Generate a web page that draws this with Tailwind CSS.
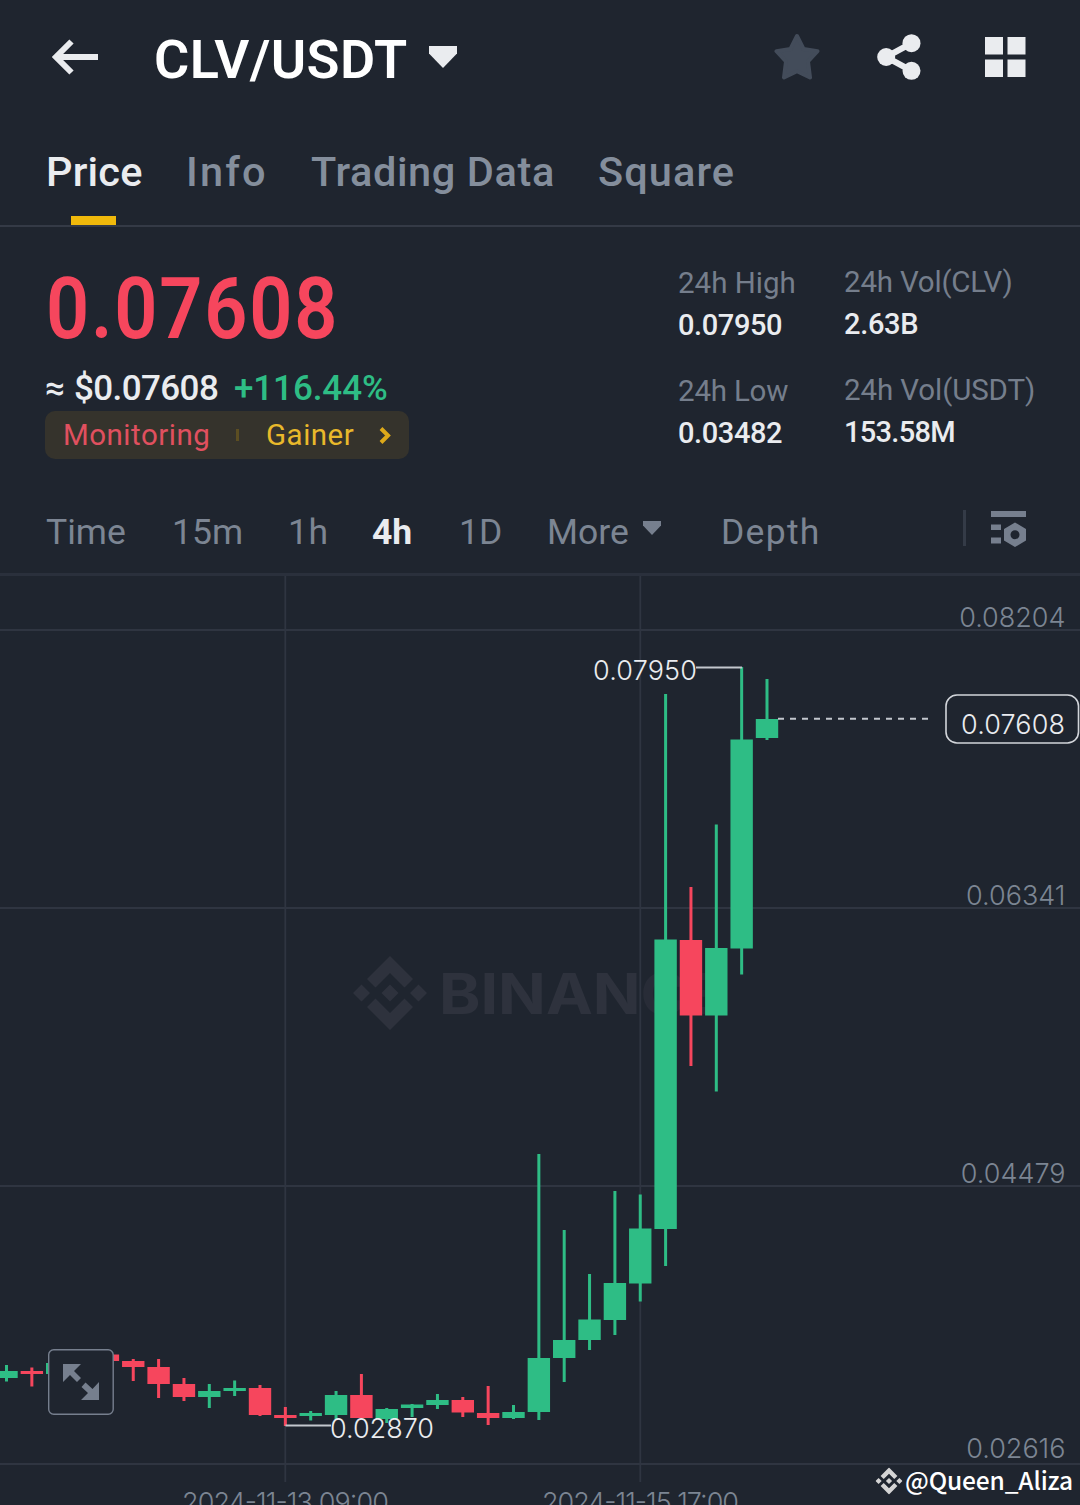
<!DOCTYPE html>
<html lang="en">
<head>
    <meta charset="UTF-8">
    <meta name="viewport" content="width=device-width, initial-scale=1.0">
    <title>CLV/USDT</title>
    <script src="https://cdn.jsdelivr.net/npm/@tailwindcss/browser@4"></script>
</head>
<body class="w-[1080px] h-[1505px] overflow-hidden bg-[#1f252f] font-[Roboto,sans-serif] text-[#eaecef] whitespace-nowrap">
    <!-- Top bar -->
    <header class="flex items-center h-[115px] pb-[2px] pl-[52px] pr-[54px]">
        <svg class="w-[47px] h-[38px]" viewBox="0 0 47 38" fill="none" stroke="#eaecef" stroke-width="6">
            <path d="M3 19H46M19.500 3.500L4 19L19.500 34.500" />
        </svg>
        <h1 class="ml-[55px] mt-[7px] text-[54px] leading-[60px] font-semibold tracking-[0.4px] text-white">CLV/USDT</h1>
        <svg class="ml-[21px] w-[28px] h-[22px]" viewBox="0 0 28 22" fill="#eaecef">
            <path d="M0 0H28V7.500L14 22L0 7.500Z" />
        </svg>
        <div class="flex items-center ml-auto">
            <svg class="w-[46px] h-[48px]" viewBox="0 0 46 48" fill="#434c5a" stroke="#434c5a" stroke-width="4" stroke-linejoin="round">
                <path d="M23 3L29.500 16L43.500 18.200L34 28.500L36 44.500L23 38.300L10 44.500L12 28.500L2.500 18.200L16.500 16Z" />
            </svg>
            <svg class="ml-[57px] w-[44px] h-[46px]" viewBox="0 0 44 46" fill="#eaecef">
                <path d="M34 9.500L9 23L34 36.500" fill="none" stroke="#eaecef" stroke-width="6" />
                <circle cx="34.500" cy="9.200" r="9" />
                <circle cx="9.200" cy="23" r="9" />
                <circle cx="34.500" cy="36.800" r="9" />
            </svg>
            <svg class="ml-[64px] w-[41px] h-[40px]" viewBox="0 0 41 40" fill="#eaecef">
                <path d="M0 0H18V17.500H0ZM22.500 0H40.500V17.500H22.500ZM0 22.500H18V40H0ZM22.500 22.500H40.500V40H22.500Z" />
            </svg>
        </div>
    </header>

    <!-- Tabs -->
    <nav class="flex h-[112px] pt-[34px] pl-[45px] border-b-2 border-[#343a46] text-[41.5px] leading-[46px] font-medium text-[#848e9c]">
        <div class="w-[141px] flex flex-col">
            <span class="ml-px tracking-[0.2px] text-[#eaecef]">Price</span>
            <span class="ml-[26px] mt-auto w-[45px] h-[9px] bg-[#f0b90b]"></span>
        </div>
        <span class="w-[125px] tracking-[2.2px]">Info</span>
        <span class="w-[287px] tracking-[0.6px]">Trading Data</span>
        <span class="tracking-[1.1px]">Square</span>
    </nav>

    <!-- Price summary -->
    <section class="flex h-[256px] pl-[45px]">
        <div class="w-[633px] pt-[32px]">
            <div class="ml-px text-[85px] leading-[100px] font-semibold tracking-[2px] text-[#f6465d] scale-x-[0.89] origin-left">0.07608</div>
            <div class="flex mt-[7px] text-[35px] leading-[46px] font-medium">
                <span class="w-[29px]">≈</span>
                <span class="w-[160px] tracking-[-0.6px]">$0.07608</span>
                <span class="tracking-[-0.1px] text-[#2ebd85]">+116.44%</span>
            </div>
            <div class="-mt-px flex items-center w-[364px] h-[48px] pl-[18px] rounded-[10px] bg-[#35332c] text-[29.5px]">
                <span class="w-[173px] pt-px tracking-[0.5px] text-[#e0505f]">Monitoring</span>
                <span class="w-[3px] h-[12px] bg-[#5c4e22]"></span>
                <span class="w-[96px] ml-[27px] pt-px tracking-[0.5px] text-[#e9b92b]">Gainer</span>
                <svg class="ml-[17px] w-[12px] h-[17px]" viewBox="0 0 12 17" fill="none" stroke="#dda91a" stroke-width="4">
                    <path d="M2 1.500L9 8.500L2 15.500" />
                </svg>
            </div>
        </div>
        <div class="grid grid-cols-[166px_auto] grid-rows-[108px_108px] content-start pt-[35px] text-[29px] leading-[42px] font-medium">
            <div>
                <div class="text-[29.5px] font-normal text-[#757e8c]">24h High</div>
                <div class="tracking-[-0.4px]">0.07950</div>
            </div>
            <div class="-mt-px">
                <div class="text-[29.5px] font-normal tracking-[-0.2px] text-[#757e8c]">24h Vol(CLV)</div>
                <div class="tracking-[-0.3px]">2.63B</div>
            </div>
            <div>
                <div class="text-[29.5px] font-normal tracking-[-0.2px] text-[#757e8c]">24h Low</div>
                <div class="tracking-[-0.4px]">0.03482</div>
            </div>
            <div class="-mt-px">
                <div class="text-[29.5px] font-normal tracking-[-0.1px] text-[#757e8c]">24h Vol(USDT)</div>
                <div class="tracking-[-0.7px]">153.58M</div>
            </div>
        </div>
    </section>

    <!-- Intervals -->
    <div class="flex items-center h-[93px] pl-[46px] pr-[54px] border-b-3 border-[#2a303c] text-[35.5px] leading-[46px] text-[#7c8593]">
        <span class="w-[126px] mt-[8px]">Time</span>
        <span class="w-[116px] mt-[8px]">15m</span>
        <span class="w-[84px] mt-[8px] tracking-[0.6px]">1h</span>
        <span class="w-[87px] mt-[7px] font-bold text-[#eaecef]">4h</span>
        <span class="w-[88px] mt-[8px]">1D</span>
        <span class="w-[96px] mt-[8px]">More</span>
        <svg class="w-[18px] h-[14px]" viewBox="0 0 18 14" fill="#767f8e">
            <path d="M0 0H18V4.500L9 14L0 4.500Z" />
        </svg>
        <span class="ml-[60px] mt-[8px] tracking-[1.3px]">Depth</span>
        <span class="ml-auto w-[3px] h-[36px] bg-[#343b47]"></span>
        <svg class="ml-[25px] mt-px w-[35px] h-[36px]" viewBox="0 0 35 36" fill="#767f8e">
            <path d="M0 0H35V6H0ZM0 13.500H10V19H0ZM0 26.500H10V32.500H0Z" />
            <path fill-rule="evenodd" d="M24 11.500L35 18V29.500L24 36L13 29.500V18ZM24 19.200A4.500 4.500 0 1 0 24 28.200A4.500 4.500 0 1 0 24 19.200Z" />
        </svg>
    </div>

    <!-- Chart -->
    <svg class="block w-[1080px] h-[929px] font-[Inter,sans-serif] font-light text-[27px]" viewBox="0 576 1080 929">
        <defs>
            <linearGradient id="fade" gradientUnits="userSpaceOnUse" x1="0" y1="0" x2="1080" y2="0">
                <stop offset="0.593" stop-color="#2e323d" />
                <stop offset="0.593" stop-color="#282c37" />
            </linearGradient>
            <symbol id="logo" viewBox="0 0 74 74">
                <path d="M37 0L60 23L51.500 31.500L37 17L22.500 31.500L14 23ZM37 74L60 51L51.500 42.500L37 57L22.500 42.500L14 51ZM0 37L8.500 28.500L17 37L8.500 45.500ZM57 37L65.500 28.500L74 37L65.500 45.500ZM28.500 37L37 28.500L45.500 37L37 45.500Z" />
            </symbol>
        </defs>

        <use href="#logo" x="353" y="956" width="74" height="74" fill="#2e323d" />
        <text x="439" y="1013.500" textLength="286" lengthAdjust="spacingAndGlyphs" class="text-[56px] font-bold" fill="url(#fade)">BINANCE</text>

        <path d="M0 630H1080M0 908H1080M0 1186H1080M0 1464H1080M285.300 576V1482M640.300 576V1482" fill="none" stroke="#2f3541" stroke-width="1.800" />

        <g fill="#7c8593" text-anchor="end">
            <text x="1065.500" y="627">0.08204</text>
            <text x="1065.500" y="905">0.06341</text>
            <text x="1065.500" y="1183">0.04479</text>
            <text x="1065.500" y="1458">0.02616</text>
        </g>
        <g fill="#7c8593">
            <text x="182" y="1512" textLength="207">2024-11-13 09:00</text>
            <text x="542" y="1512" textLength="197">2024-11-15 17:00</text>
        </g>

        <g id="candles"></g>

        <!-- High / low markers -->
        <path d="M696 667.500H742M285.500 1425.500H331" stroke="#c3c7ce" stroke-width="1.800" />
        <text x="593" y="680" fill="#eaecef" textLength="104">0.07950</text>
        <text x="330" y="1438" fill="#eaecef" textLength="104">0.02870</text>

        <!-- Last price -->
        <path d="M778 718.800H929" stroke="#c3c7ce" stroke-width="2" stroke-dasharray="6 6" />
        <rect x="946" y="695" width="132.500" height="48" rx="11" fill="#1f252f" stroke="#d2d5da" stroke-width="1.600" />
        <text x="961" y="734" fill="#eaecef" textLength="104">0.07608</text>

        <!-- Fullscreen button -->
        <rect x="48.700" y="1349.700" width="64.500" height="64.500" rx="5" fill="#1f252f" stroke="#767f8e" stroke-width="1.400" />
        <path d="M63 1364H81L74 1371L81 1378L77 1382L70 1375L63 1382ZM99 1400H81L88 1393L81.500 1387L85.500 1382.500L92.500 1389L99 1382Z" fill="#767f8e" />

        <!-- Author -->
        <use href="#logo" x="875.500" y="1467.500" width="27" height="27" fill="#d4d4d4" />
        <text x="905" y="1490" textLength="168" class="font-['Noto_Sans_CJK_SC',sans-serif] font-medium text-[24.5px]" fill="#ffffff">@Queen_Aliza</text>
    </svg>

    <script>
        const UP = "#2ebd85";
        const DOWN = "#f6465d";

        // [slot, high, body top, body bottom, low, color]
        const candles = [
            [0, 1365, 1371, 1378, 1381.5, UP],
            [1, 1367.5, 1371, 1374, 1386.5, DOWN],
            [2, 1363, 1363, 1374, 1374, UP],
            [4, 1354, 1354.5, 1361, 1361, DOWN],
            [5, 1359, 1361, 1367, 1381, DOWN],
            [6, 1359, 1367, 1384, 1398, DOWN],
            [7, 1378, 1384, 1397, 1401, DOWN],
            [8, 1384, 1391, 1397, 1408, UP],
            [9, 1380.5, 1388, 1391, 1396, UP],
            [10, 1385, 1388, 1415, 1416, DOWN],
            [11, 1407, 1415, 1418, 1426, DOWN],
            [12, 1411, 1413, 1416, 1420.5, UP],
            [13, 1391, 1395, 1415, 1419, UP],
            [14, 1374, 1395, 1418, 1418, DOWN],
            [15, 1408, 1409, 1419, 1423, UP],
            [16, 1404, 1404.5, 1408, 1417, UP],
            [17, 1394, 1400, 1405, 1409, UP],
            [18, 1397, 1400, 1412.5, 1417, DOWN],
            [19, 1386, 1413, 1418, 1425, DOWN],
            [20, 1405, 1412, 1418, 1419, UP],
            [21, 1154, 1358, 1412, 1420, UP],
            [22, 1230, 1340, 1358, 1382, UP],
            [23, 1274, 1319.5, 1340, 1350, UP],
            [24, 1191, 1283, 1320, 1335, UP],
            [25, 1194.5, 1228.5, 1283.5, 1301.5, UP],
            [26, 694, 939.5, 1229, 1266, UP],
            [27, 887, 940, 1015.5, 1066, DOWN],
            [28, 824.5, 948, 1015.5, 1091.5, UP],
            [29, 667, 739.5, 948.5, 974.5, UP],
            [30, 679, 719, 738, 740, UP]
        ];

        // Draw candles
        document.getElementById("candles").innerHTML = candles.map(([i, high, top, bottom, low, color]) => {
            const x = 6.5 + i * 25.35;
            return `<rect x="${x - 1.5}" y="${high}" width="3" height="${low - high}" fill="${color}" />
                <rect x="${x - 11.2}" y="${top}" width="22.4" height="${bottom - top}" fill="${color}" />`;
        }).join("");
    </script>
</body>
</html>
